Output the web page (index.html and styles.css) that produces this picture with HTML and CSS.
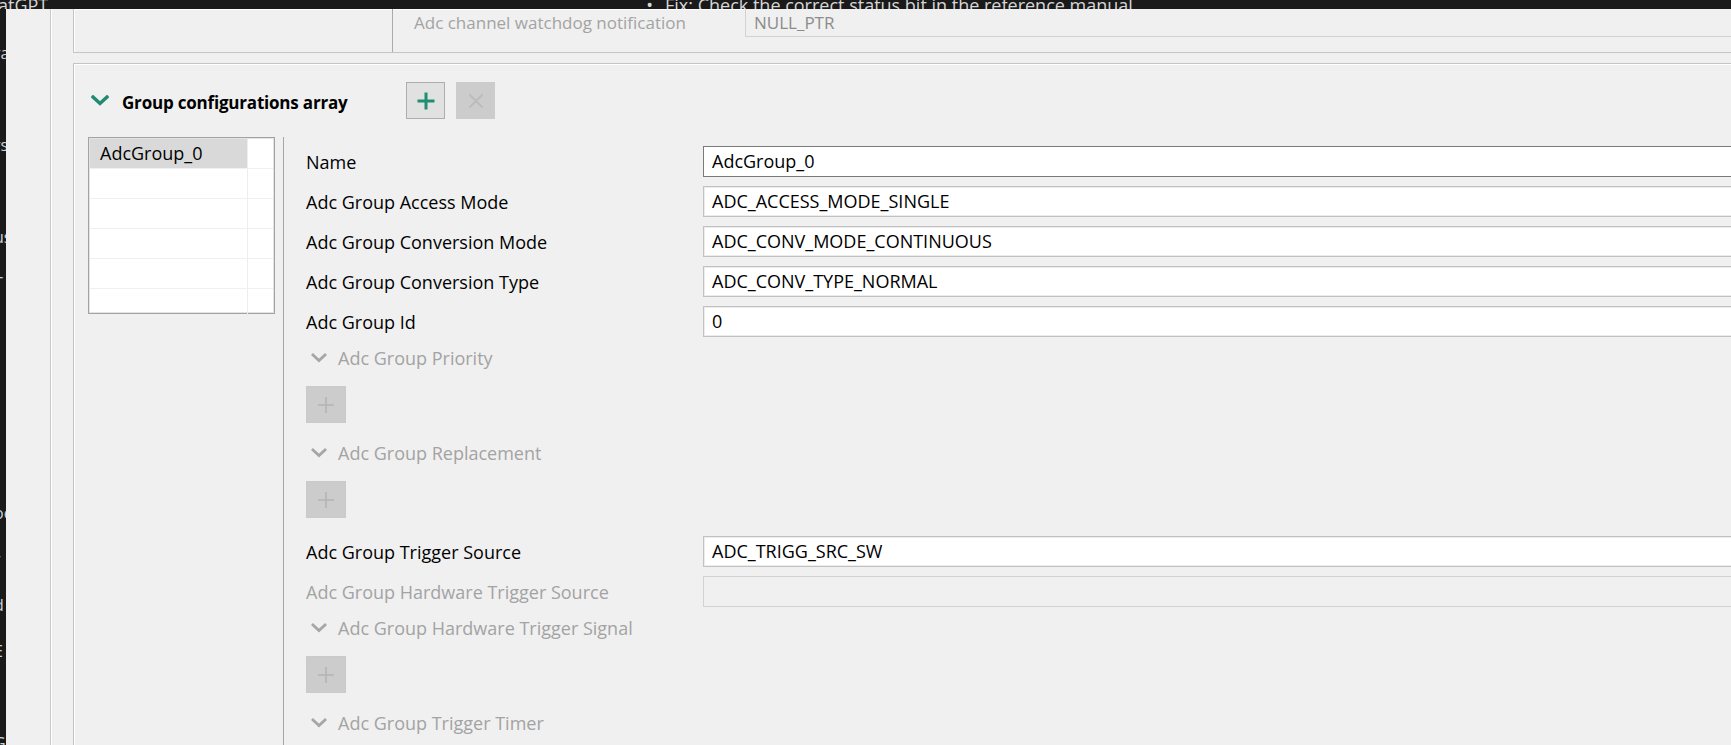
FILE: index.html
```html
<!DOCTYPE html>
<html lang="en">
<head>
  <meta charset="UTF-8">
  <title>Adc Group configurations</title>
  <link rel="stylesheet" href="styles.css">
</head>
<body>

  <div class="topbar">
    <span class="chat-title">atGPT</span>
    <span class="chat-bullet">&bull;</span>
    <span class="chat-line">Fix: Check the correct status bit in the reference manual</span>
  </div>

  <div class="main">
    <div class="chat-col">
      <div>ra</div>
      <div>t</div>
      <div>rs</div>
      <div>t</div>
      <div>us</div>
      <div>T</div>
      <div>&nbsp;</div>
      <div>&nbsp;</div>
      <div>t</div>
      <div>&nbsp;</div>
      <div>oc</div>
      <div>r</div>
      <div>d</div>
      <div>E</div>
      <div>&nbsp;</div>
      <div>G</div>
    </div>

    <div class="panel">
      <div class="gutter"></div>

      <div class="content">

        <!-- previous container, scrolled mostly out of view -->
        <div class="box box-top">
          <div class="box-top-spacer"></div>
          <div class="subform">
            <span class="watchdog-label label-disabled">Adc channel watchdog notification</span>
            <div class="field field-disabled field-cut">NULL_PTR</div>
          </div>
        </div>

        <div class="box box-group">
          <div class="group-head">
            <svg class="chevron chevron-main" width="18" height="11" viewBox="0 0 18 11">
              <polyline points="2,2 9,8.5 16,2" fill="none" stroke="#1f8b72" stroke-width="3.4" stroke-linecap="square"/>
            </svg>
            <span class="group-title">Group configurations array</span>
            <button class="tool-btn" title="Add">
              <svg width="20" height="20" viewBox="0 0 20 20">
                <path d="M10 1.5 V18.5 M1.5 10 H18.5" stroke="#1f8f74" stroke-width="3" fill="none"/>
              </svg>
            </button>
            <button class="tool-btn tool-btn-disabled" title="Remove">
              <svg width="18" height="18" viewBox="0 0 18 18">
                <path d="M2.5 2.5 L15.5 15.5 M15.5 2.5 L2.5 15.5" stroke="#bcbcbc" stroke-width="2" fill="none"/>
              </svg>
            </button>
          </div>

          <div class="group-body">
            <div class="item-list">
              <div class="item-row"><span class="item-name selected">AdcGroup_0</span><span class="item-extra"></span></div>
              <div class="item-row"><span class="item-name"></span><span class="item-extra"></span></div>
              <div class="item-row"><span class="item-name"></span><span class="item-extra"></span></div>
              <div class="item-row"><span class="item-name"></span><span class="item-extra"></span></div>
              <div class="item-row"><span class="item-name"></span><span class="item-extra"></span></div>
              <div class="item-row last"><span class="item-name"></span><span class="item-extra"></span></div>
            </div>

            <div class="form">
              <div class="row">
                <span class="label">Name</span>
                <div class="field field-focus">AdcGroup_0</div>
              </div>
              <div class="row">
                <span class="label">Adc Group Access Mode</span>
                <div class="field">ADC_ACCESS_MODE_SINGLE</div>
              </div>
              <div class="row">
                <span class="label">Adc Group Conversion Mode</span>
                <div class="field">ADC_CONV_MODE_CONTINUOUS</div>
              </div>
              <div class="row">
                <span class="label">Adc Group Conversion Type</span>
                <div class="field">ADC_CONV_TYPE_NORMAL</div>
              </div>
              <div class="row">
                <span class="label">Adc Group Id</span>
                <div class="field">0</div>
              </div>

              <div class="sub-row">
                <svg class="chevron" width="16" height="10" viewBox="0 0 16 10">
                  <polyline points="2,2 8,7.5 14,2" fill="none" stroke="#a6a6a6" stroke-width="2.8" stroke-linecap="square"/>
                </svg>
                <span class="label-disabled">Adc Group Priority</span>
              </div>
              <button class="add-btn" title="Add">
                <svg width="20" height="20" viewBox="0 0 20 20">
                  <path d="M10 2 V18 M2 10 H18" stroke="#b4b4b4" stroke-width="1.6" fill="none"/>
                </svg>
              </button>

              <div class="sub-row">
                <svg class="chevron" width="16" height="10" viewBox="0 0 16 10">
                  <polyline points="2,2 8,7.5 14,2" fill="none" stroke="#a6a6a6" stroke-width="2.8" stroke-linecap="square"/>
                </svg>
                <span class="label-disabled">Adc Group Replacement</span>
              </div>
              <button class="add-btn" title="Add">
                <svg width="20" height="20" viewBox="0 0 20 20">
                  <path d="M10 2 V18 M2 10 H18" stroke="#b4b4b4" stroke-width="1.6" fill="none"/>
                </svg>
              </button>

              <div class="row">
                <span class="label">Adc Group Trigger Source</span>
                <div class="field">ADC_TRIGG_SRC_SW</div>
              </div>
              <div class="row">
                <span class="label label-disabled">Adc Group Hardware Trigger Source</span>
                <div class="field field-disabled"></div>
              </div>

              <div class="sub-row">
                <svg class="chevron" width="16" height="10" viewBox="0 0 16 10">
                  <polyline points="2,2 8,7.5 14,2" fill="none" stroke="#a6a6a6" stroke-width="2.8" stroke-linecap="square"/>
                </svg>
                <span class="label-disabled">Adc Group Hardware Trigger Signal</span>
              </div>
              <button class="add-btn" title="Add">
                <svg width="20" height="20" viewBox="0 0 20 20">
                  <path d="M10 2 V18 M2 10 H18" stroke="#b4b4b4" stroke-width="1.6" fill="none"/>
                </svg>
              </button>

              <div class="sub-row">
                <svg class="chevron" width="16" height="10" viewBox="0 0 16 10">
                  <polyline points="2,2 8,7.5 14,2" fill="none" stroke="#a6a6a6" stroke-width="2.8" stroke-linecap="square"/>
                </svg>
                <span class="label-disabled">Adc Group Trigger Timer</span>
              </div>
            </div>
          </div>
        </div>

      </div>
    </div>
  </div>

</body>
</html>
```

FILE: styles.css
```css
html, body {
  margin: 0;
  height: 100%;
}

body {
  background: #1a1a1a;
  font-family: "Open Sans", "Noto Sans", sans-serif;
  font-size: 18px;
  color: #000;
  overflow: hidden;
}

/* dark strip of the window behind */
.topbar {
  height: 9px;
  overflow: hidden;
  display: flex;
  align-items: flex-start;
  color: #d6d6d6;
  font-size: 18px;
  line-height: 8px;
  white-space: nowrap;
}

.topbar span {
  margin-top: 1px;
}

.chat-title {
  margin-left: -2px;
}

.chat-bullet {
  margin-left: 598px;
}

.chat-line {
  margin-left: 12px;
}

.main {
  display: flex;
  height: 736px;
}

.chat-col {
  width: 6px;
  overflow: hidden;
  padding-top: 21px;
  color: #d0d0d0;
  font-size: 16px;
  line-height: 46px;
  white-space: nowrap;
}

.chat-col div {
  margin-left: -6px;
}

.panel {
  flex: 1;
  display: flex;
  background: #f0f0f0;
  overflow: hidden;
}

.gutter {
  width: 44px;
  flex: none;
  border-right: 1px solid #c9c9c9;
  box-shadow: 1px 0 0 #fff;
}

.content {
  flex: 1;
  margin-right: -60px;
  padding-left: 22px;
  display: flex;
  flex-direction: column;
}

/* etched group box borders */
.box {
  border-left: 1px solid #c4c4c4;
  box-shadow: inset 1px 1px 0 #fff;
}

.box-top {
  height: 46px;
  box-sizing: border-box;
  border-bottom: 1px solid #c4c4c4;
  display: flex;
}

.box-top-spacer {
  width: 318px;
  flex: none;
}

.subform {
  flex: 1;
  height: 43px;
  border-left: 1px solid #ababab;
  padding-left: 21px;
  display: flex;
  align-items: flex-start;
}

.subform .watchdog-label {
  width: 331px;
  flex: none;
  font-size: 17px;
  line-height: 28px;
}

.box-group {
  flex: 1;
  margin-top: 10px;
  border-top: 1px solid #c4c4c4;
  padding: 18px 0 0 14px;
}

.group-head {
  display: flex;
  align-items: center;
  height: 37px;
}

.chevron-main {
  margin-left: 3px;
}

.group-title {
  width: 284px;
  margin-left: 13px;
  font-weight: 700;
  font-size: 17px;
  letter-spacing: -0.2px;
  position: relative;
  top: 2px;
}

.tool-btn {
  width: 39px;
  height: 37px;
  margin-right: 11px;
  padding: 0;
  border: 1px solid #adadad;
  background: #e1e1e1;
  display: flex;
  align-items: center;
  justify-content: center;
}

.tool-btn-disabled {
  border-color: #cccccc;
  background: #cccccc;
}

.group-body {
  display: flex;
  margin-top: 18px;
  height: 100%;
}

.item-list {
  width: 187px;
  height: 177px;
  box-sizing: border-box;
  flex: none;
  border: 1px solid #a3a3a3;
  box-shadow: inset 0 0 0 1px #e3e3e3;
  background: #fff;
  padding: 1px;
}

.item-row {
  display: flex;
  height: 29px;
  border-bottom: 1px solid #f0f0f0;
}

.item-row.last {
  border-bottom: none;
}

.item-name {
  width: 157px;
  padding-left: 10px;
  box-sizing: border-box;
  line-height: 28px;
}

.item-name.selected {
  background: #d9d9d9;
}

.item-extra {
  flex: 1;
  border-left: 1px solid #e9eef3;
}

.form {
  flex: 1;
  margin-left: 8px;
  border-left: 1px solid #a6a6a6;
  padding: 9px 0 0 22px;
}

.row {
  display: flex;
  align-items: center;
  height: 31px;
  margin-bottom: 9px;
}

.label {
  width: 397px;
  flex: none;
}

.label-disabled {
  color: #a3a3a3;
}

.field {
  flex: 1;
  height: 31px;
  box-sizing: border-box;
  border: 1px solid #c2c2c2;
  box-shadow: inset 0 0 0 1px #ececec;
  background: #fff;
  padding-left: 8px;
  line-height: 29px;
  white-space: nowrap;
}

.field-focus {
  border-color: #7a7a7a;
  box-shadow: none;
}

.field-disabled {
  background: #f0f0f0;
  border-color: #d2d2d2;
  box-shadow: none;
  color: #8c8c8c;
}

.field-cut {
  height: 28px;
  border-top: none;
  line-height: 27px;
  font-size: 17px;
}

.sub-row {
  display: flex;
  align-items: center;
  height: 24px;
  margin-bottom: 16px;
  padding-left: 5px;
}

.sub-row .chevron {
  margin-right: 11px;
}

.add-btn {
  display: flex;
  align-items: center;
  justify-content: center;
  width: 40px;
  height: 37px;
  margin-bottom: 18px;
  padding: 0;
  border: 1px solid #cacaca;
  background: #cccccc;
}
```
